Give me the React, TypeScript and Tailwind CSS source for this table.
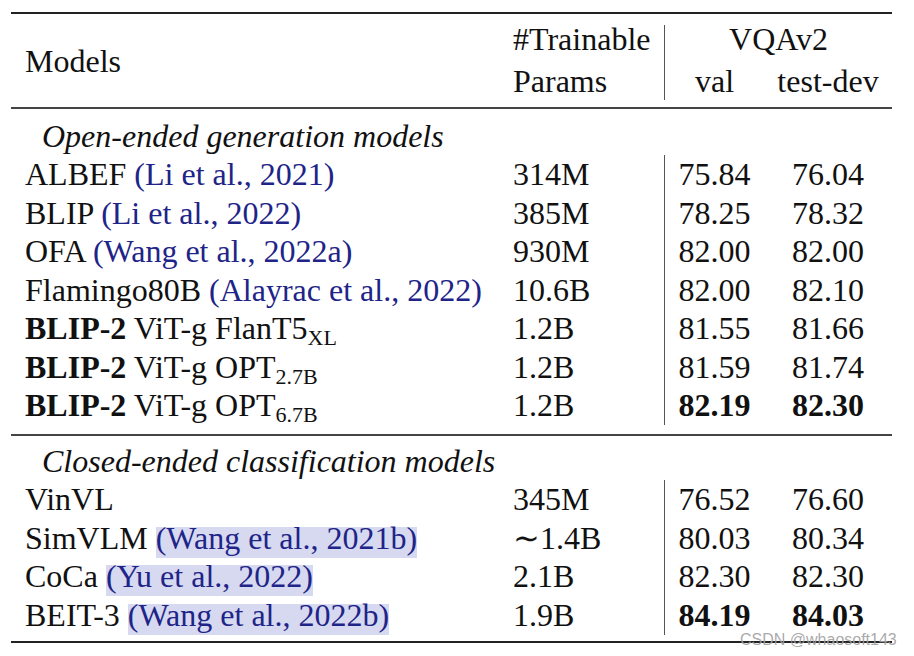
import React from "react";

type Row = {
  name: React.ReactNode;
  cite?: string;
  marked?: boolean;
  params: string;
  val: string;
  dev: string;
  best?: boolean;
};

function Sub({ children }: { children: React.ReactNode }) {
  return <sub className="text-[22px] leading-none align-baseline -bottom-[6px]">{children}</sub>;
}

const openRows: Row[] = [
  { name: "ALBEF", cite: "(Li et al., 2021)", params: "314M", val: "75.84", dev: "76.04" },
  { name: "BLIP", cite: "(Li et al., 2022)", params: "385M", val: "78.25", dev: "78.32" },
  { name: "OFA", cite: "(Wang et al., 2022a)", params: "930M", val: "82.00", dev: "82.00" },
  { name: "Flamingo80B", cite: "(Alayrac et al., 2022)", params: "10.6B", val: "82.00", dev: "82.10" },
  {
    name: (
      <>
        <b>BLIP-2</b> ViT-g FlanT5<Sub>XL</Sub>
      </>
    ),
    params: "1.2B",
    val: "81.55",
    dev: "81.66",
  },
  {
    name: (
      <>
        <b>BLIP-2</b> ViT-g OPT<Sub>2.7B</Sub>
      </>
    ),
    params: "1.2B",
    val: "81.59",
    dev: "81.74",
  },
  {
    name: (
      <>
        <b>BLIP-2</b> ViT-g OPT<Sub>6.7B</Sub>
      </>
    ),
    params: "1.2B",
    val: "82.19",
    dev: "82.30",
    best: true,
  },
];

const closedRows: Row[] = [
  { name: "VinVL", params: "345M", val: "76.52", dev: "76.60" },
  { name: "SimVLM", cite: "(Wang et al., 2021b)", marked: true, params: "\u223C1.4B", val: "80.03", dev: "80.34" },
  { name: "CoCa", cite: "(Yu et al., 2022)", marked: true, params: "2.1B", val: "82.30", dev: "82.30" },
  { name: "BEIT-3", cite: "(Wang et al., 2022b)", marked: true, params: "1.9B", val: "84.19", dev: "84.03", best: true },
];

function TableRow({ row }: { row: Row }) {
  return (
    <div className="grid grid-cols-[502px_151px_100px_128px] h-[38.5px] leading-[38.5px] whitespace-nowrap">
      <div className="pl-[14px]">
        {row.name}
        {row.cite && " "}
        {row.cite &&
          (row.marked ? (
            <span className="inline-block leading-[22px] pb-[9px] bg-[#d6d9f0] text-[#1e2488]">
              {row.cite}
            </span>
          ) : (
            <span className="text-[#1e2488]">{row.cite}</span>
          ))}
      </div>
      <div>{row.params}</div>
      <div className={`border-l-[1.5px] border-[#555] text-center ${row.best ? "font-bold" : ""}`}>
        {row.val}
      </div>
      <div className={`text-center ${row.best ? "font-bold" : ""}`}>{row.dev}</div>
    </div>
  );
}

function Section({ title, rows }: { title: string; rows: Row[] }) {
  return (
    <div>
      <div className="italic pl-[31px] h-[38.5px] leading-[38.5px]">{title}</div>
      {rows.map((r, i) => (
        <TableRow key={i} row={r} />
      ))}
    </div>
  );
}

export default function App() {
  return (
    <div className="relative w-[914px] h-[656px] bg-white text-[#111] font-[family-name:Liberation_Serif,Times_New_Roman,serif] text-[32px] overflow-hidden">
      <div className="ml-[11px] w-[881px] pt-[12px]">
        <div className="h-[2px] bg-[#222]" />

        {/* header */}
        <div className="grid grid-cols-[502px_151px_228px] h-[93px] whitespace-nowrap">
          <div className="pl-[14px] flex items-center">Models</div>
          <div className="flex flex-col pt-[4px] leading-[42px]">
            <div>#Trainable</div>
            <div>Params</div>
          </div>
          <div className="mt-[11px] h-[75px] border-l-[1.5px] border-[#555] flex flex-col gap-[14px] leading-[28px]">
            <div className="text-center">VQAv2</div>
            <div className="grid grid-cols-[99px_128px]">
              <div className="text-center">val</div>
              <div className="text-center">test-dev</div>
            </div>
          </div>
        </div>

        <div className="h-[1.5px] bg-[#444]" />

        <div className="pt-[8px]">
          <Section title="Open-ended generation models" rows={openRows} />
        </div>

        <div className="mt-[9.5px] h-[1.5px] bg-[#444]" />

        <div className="pt-[6px] pb-[7px]">
          <Section title="Closed-ended classification models" rows={closedRows} />
        </div>

        <div className="h-[2px] bg-[#222]" />
      </div>

      <div className="absolute left-[740px] top-[632px] font-[family-name:Liberation_Sans,Arial,sans-serif] text-[16px] leading-[16px] text-[#a0a0a0]/90">
        CSDN @whaosoft143
      </div>
    </div>
  );
}
